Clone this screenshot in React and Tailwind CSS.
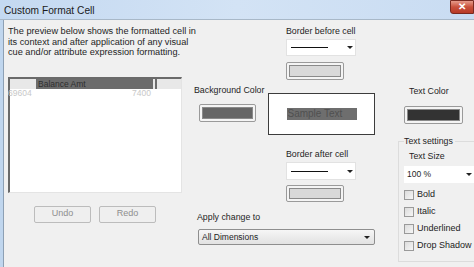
const font = { fontFamily: '"Liberation Sans", Arial, sans-serif' };

const Dropdown = ({ children, className = '' }) => (
  <div className={`flex items-center bg-white border border-[#e2e2e2] ${className}`}>
    <div className="flex-1 flex items-center px-[4px]">{children}</div>
    <div className="w-[10px] flex justify-center">
      <div className="w-0 h-0 border-l-[3px] border-r-[3px] border-t-[3px] border-l-transparent border-r-transparent border-t-[#222]" />
    </div>
  </div>
);

const ColorButton = ({ fill, className = '' }) => (
  <div className={`rounded-[2px] border border-[#9a9a9a] bg-[#f4f4f4] p-[2px] ${className}`}>
    <div className={`w-full h-full border border-[#8a8a8a] ${fill}`} />
  </div>
);

const Checkbox = ({ label }) => (
  <div className="flex items-center gap-[3px] h-[17px]">
    <div className="w-[10px] h-[10px] border border-[#9a9a9a] bg-gradient-to-br from-[#dcdcdc] to-[#f6f6f6]" />
    <span className="text-[9px] text-[#222]">{label}</span>
  </div>
);

export default function App() {
  return (
    <div className="w-[474px] h-[267px] overflow-hidden flex flex-col bg-[#f0f0f0]" style={font}>
      <div className="h-[20px] flex items-start justify-between bg-gradient-to-r from-[#c4d9f1] via-[#d3e3f5] to-[#c9dcf2] border-b border-[#a8b8c8]">
        <span className="pl-[4px] pt-[4px] text-[10.2px] leading-[13px] text-[#1b1b1b]">Custom Format Cell</span>
        <div className="w-[24px] h-[14px] rounded-bl-[3px] bg-gradient-to-b from-[#e59a8a] via-[#c8503c] to-[#b83a26] border border-[#7a2a20] flex items-center justify-center text-white text-[10px] font-bold leading-none">
          ✕
        </div>
      </div>

      <div className="flex-1 flex border-l-[3px] border-[#c0d6ee]">
        <div className="flex-1 flex border-l border-[#8da0b4] pt-[6px]">
          {/* left column */}
          <div className="w-[175px] ml-[4px] flex flex-col">
            <p className="text-[9.2px] leading-[10.5px] text-[#1e1e1e] whitespace-nowrap">
              The preview below shows the formatted cell in
              <br />
              its context and after application of any visual
              <br />
              cue and/or attribute expression formatting.
            </p>
            <div className="mt-[19px] h-[116px] w-[174px] bg-white border-l-2 border-t-2 border-[#6a6a6a] border-r border-r-[#e4e4e4] border-b border-b-[#e4e4e4] flex flex-col">
              <div className="h-[10px] flex bg-[#e8e8e8]">
                <div className="w-[26px]" />
                <div className="w-[117px] bg-[#6c6c6c] text-[8.5px] leading-[10px] text-[#2e2e2e] pl-[2px]">Balance Amt</div>
                <div className="w-[2px]" />
                <div className="w-[2px] bg-[#6c6c6c]" />
              </div>
              <div className="h-[9px] flex text-[8.5px] leading-[9px] text-[#c8c8c8]">
                <div className="w-[26px] -ml-[2px]">69604</div>
                <div className="w-[117px] text-right">7400</div>
              </div>
            </div>
            <div className="mt-[13px] flex gap-[8px] pl-[26px]">
              <div className="w-[57px] h-[17px] rounded-[2px] border border-[#bcbcbc] bg-[#efefef] flex items-center justify-center text-[9px] text-[#8e8e8e]">Undo</div>
              <div className="w-[57px] h-[17px] rounded-[2px] border border-[#bcbcbc] bg-[#efefef] flex items-center justify-center text-[9px] text-[#8e8e8e]">Redo</div>
            </div>
          </div>

          {/* middle column */}
          <div className="w-[182px] ml-[11px] flex flex-col text-[8.8px] text-[#1e1e1e]">
            <div className="ml-[92px] flex flex-col">
              <span className="leading-[11px]">Border before cell</span>
              <Dropdown className="mt-[2px] h-[17px] w-[70px]">
                <div className="h-[1.5px] w-[37px] bg-[#111]" />
              </Dropdown>
              <ColorButton fill="bg-[#d9d9d9]" className="mt-[6px] w-[58px] h-[18px]" />
            </div>
            <div className="mt-[5px] flex">
              <div className="w-[74px] flex flex-col">
                <span className="leading-[11px]">Background Color</span>
                <ColorButton fill="bg-[#666]" className="mt-[8px] ml-[5px] w-[57px] h-[18px]" />
              </div>
              <div className="mt-[8px] w-[107px] h-[42px] bg-white border border-[#3c3c3c] flex items-center justify-center">
                <span className="bg-[#6e6e6e] text-[#505050] text-[10px] leading-[12px] px-[1px] w-[70px]">Sample Text</span>
              </div>
            </div>
            <div className="ml-[92px] mt-[14px] flex flex-col">
              <span className="leading-[11px]">Border after cell</span>
              <Dropdown className="mt-[2px] h-[18px] w-[70px]">
                <div className="h-[1px] w-[37px] bg-[#111]" />
              </Dropdown>
              <ColorButton fill="bg-[#d9d9d9]" className="mt-[5px] w-[58px] h-[17px]" />
            </div>
            <span className="mt-[10px] ml-[3px] leading-[11px]">Apply change to</span>
            <div className="mt-[6px] ml-[4px] w-[177px] h-[16px] rounded-[2px] border border-[#8e8e8e] bg-gradient-to-b from-[#f6f6f6] to-[#e2e2e2] flex items-center pl-[3px] pr-[4px]">
              <span className="flex-1 text-[8.5px]">All Dimensions</span>
              <div className="w-0 h-0 border-l-[3px] border-r-[3px] border-t-[3px] border-l-transparent border-r-transparent border-t-[#222]" />
            </div>
          </div>

          {/* right column */}
          <div className="flex-1 ml-[22px] flex flex-col text-[8.8px] text-[#1e1e1e]">
            <span className="mt-[60px] ml-[11px] leading-[11px]">Text Color</span>
            <ColorButton fill="bg-[#333]" className="mt-[9px] ml-[6px] w-[59px] h-[18px]" />
            <fieldset className="mt-[12px] h-[126px] border-l border-t border-b border-[#dcdcdc] pl-[5px]">
              <legend className="leading-[11px] pr-[2px]">Text settings</legend>
              <span className="block ml-[5px] mt-[4px] leading-[11px]">Text Size</span>
              <Dropdown className="mt-[4px] h-[17px] border-0">
                <span className="text-[8.5px] -ml-[1px]">100 %</span>
              </Dropdown>
              <div className="mt-[3px] flex flex-col">
                <Checkbox label="Bold" />
                <Checkbox label="Italic" />
                <Checkbox label="Underlined" />
                <Checkbox label="Drop Shadow" />
              </div>
            </fieldset>
          </div>
        </div>
      </div>
    </div>
  );
}
